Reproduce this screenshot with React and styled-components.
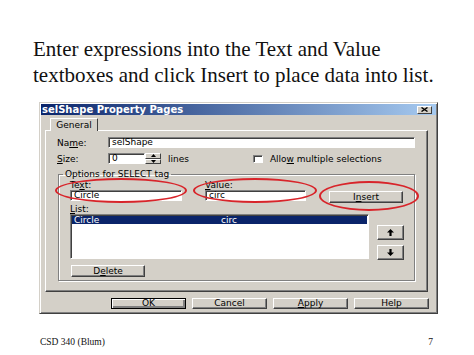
import React from 'react';
import styled, { createGlobalStyle } from 'styled-components';

const GlobalStyle = createGlobalStyle`
  html, body {
    margin: 0;
    padding: 0;
    background: #fff;
  }
`;

const Slide = styled.div`
  width: 474px;
  height: 355px;
  box-sizing: border-box;
  padding-top: 36px;
  overflow: hidden;
  background: #fff;
  font-family: "Liberation Serif", "Times New Roman", serif;
  color: #111;
`;

const Heading = styled.h1`
  margin: 0 0 0 33px;
  font-weight: normal;
  font-size: 21px;
  line-height: 26px;
`;

const Window = styled.div`
  margin: 14px 0 0 39px;
  width: 399px;
  height: 212px;
  box-sizing: border-box;
  display: flex;
  flex-direction: column;
  padding: 1px;
  background: #d4d0c8;
  border: 1px solid;
  border-color: #d4d0c8 #404040 #404040 #d4d0c8;
  box-shadow: inset 1px 1px #fff, inset -1px -1px #808080;
  font-family: "DejaVu Sans", Tahoma, sans-serif;
  font-size: 9px;
  color: #000;
`;

const TitleBar = styled.div`
  height: 11px;
  display: flex;
  align-items: center;
  justify-content: space-between;
  padding: 0 4px 0 1px;
  background: linear-gradient(to right, #0a246a, #a6caf0);
  color: #fff;
  font-weight: bold;
  font-size: 10px;
  line-height: 11px;
  white-space: nowrap;
`;

const CloseButton = styled.div`
  width: 15px;
  height: 8px;
  box-sizing: border-box;
  display: flex;
  align-items: center;
  justify-content: center;
  background: #d4d0c8;
  border: 1px solid;
  border-color: #fff #404040 #404040 #fff;
`;

const Body = styled.div`
  display: flex;
  flex-direction: column;
  padding: 3px 8px 0 4px;
`;

const TabStrip = styled.div`
  display: flex;
  padding-left: 5px;
`;

const Tab = styled.div`
  position: relative;
  z-index: 1;
  width: 48px;
  height: 13px;
  margin-bottom: -1px;
  box-sizing: border-box;
  display: flex;
  align-items: center;
  justify-content: center;
  background: #d4d0c8;
  border: 1px solid;
  border-color: #fff #404040 transparent #fff;
  border-bottom: none;
  border-radius: 1px 1px 0 0;
`;

const TabPanel = styled.div`
  height: 162px;
  box-sizing: border-box;
  display: flex;
  flex-direction: column;
  padding: 6px 12px 0 11px;
  border: 1px solid;
  border-color: #fff #404040 #404040 #fff;
  box-shadow: inset -1px -1px #808080;
`;

const FieldRow = styled.div`
  display: flex;
  align-items: center;
  height: 11px;
  margin-top: ${p => p.$gap || 0}px;
`;

const Label = styled.span`
  width: ${p => (p.$width ? `${p.$width}px` : 'auto')};
  flex-shrink: 0;
  line-height: 10px;
  white-space: nowrap;
`;

const TextBox = styled.div`
  height: ${p => p.$height || 11}px;
  width: ${p => (p.$width ? `${p.$width}px` : 'auto')};
  flex: ${p => (p.$width ? '0 0 auto' : '1')};
  box-sizing: border-box;
  display: flex;
  align-items: center;
  padding-left: 3px;
  background: #fff;
  border: 1px solid;
  border-color: #808080 #fff #fff #808080;
  box-shadow: inset 1px 1px #404040;
  font-size: 9px;
  line-height: 9px;
  white-space: nowrap;
`;

const Spinner = styled.div`
  width: 16px;
  height: 11px;
  display: flex;
  flex-direction: column;
`;

const SpinHalf = styled.div`
  flex: 1;
  display: flex;
  align-items: center;
  justify-content: center;
  box-sizing: border-box;
  background: #d4d0c8;
  border: 1px solid;
  border-color: #fff #404040 #404040 #fff;
`;

const Suffix = styled.span`
  margin-left: 7px;
`;

const CheckGroup = styled.label`
  display: flex;
  align-items: center;
  margin-left: 64px;
`;

const CheckBox = styled.span`
  width: 10px;
  height: 8px;
  box-sizing: border-box;
  margin-right: 7px;
  background: #fff;
  border: 1px solid;
  border-color: #808080 #fff #fff #808080;
  box-shadow: inset 1px 1px #404040;
`;

const GroupBox = styled.fieldset`
  margin: 5px 0 0 1px;
  padding: 0;
  min-width: 0;
  border: 1px solid #808080;
  box-shadow: inset 1px 1px #fff, 1px 1px #fff;
`;

const Legend = styled.legend`
  margin-left: 4px;
  padding: 0 2px;
  line-height: 10px;
  font-size: 9px;
`;

const GroupInner = styled.div`
  display: flex;
  flex-direction: column;
  padding: 1px 0 3px 11px;
`;

const EntryRow = styled.div`
  display: flex;
  align-items: flex-start;
`;

const Entry = styled.div`
  position: relative;
  display: flex;
  flex-direction: column;
  width: ${p => p.$width}px;
  margin-left: ${p => p.$offset || 0}px;
`;

const Ring = styled.span`
  position: absolute;
  left: ${p => p.$l}px;
  right: ${p => p.$r}px;
  top: ${p => p.$t}px;
  bottom: ${p => p.$b}px;
  border: 2px solid #d8242a;
  border-radius: 50%;
  pointer-events: none;
`;

const ButtonSlot = styled.div`
  position: relative;
  margin: ${p => p.$top || 0}px 0 0 ${p => p.$offset || 0}px;
`;

const Button = styled.div`
  width: ${p => p.$width}px;
  height: ${p => p.$height || 12}px;
  box-sizing: border-box;
  display: flex;
  align-items: center;
  justify-content: center;
  background: #d4d0c8;
  border: 1px solid;
  border-color: ${p => (p.$default ? '#000' : '#fff #404040 #404040 #fff')};
  box-shadow: ${p =>
    p.$default
      ? 'inset 1px 1px #fff, inset -2px -2px #808080'
      : 'inset -1px -1px #808080'};
  font-size: 9px;
  line-height: 9px;
  white-space: nowrap;
`;

const ListCaption = styled.span`
  margin-top: 1px;
  line-height: 10px;
`;

const ListRow = styled.div`
  display: flex;
  align-items: flex-start;
`;

const ListBox = styled.div`
  width: 299px;
  height: 45px;
  box-sizing: border-box;
  padding: 1px 0 0 1px;
  background: #fff;
  border: 1px solid;
  border-color: #808080 #fff #fff #808080;
  box-shadow: inset 1px 1px #404040;
`;

const ListItem = styled.div`
  display: flex;
  height: 8px;
  padding-left: 2px;
  margin-right: 1px;
  background: ${p => (p.$selected ? '#0a246a' : 'transparent')};
  color: ${p => (p.$selected ? '#fff' : '#000')};
  font-size: 9px;
  line-height: 8px;
`;

const ListCell = styled.span`
  width: ${p => p.$width}px;
  flex-shrink: 0;
`;

const MoveButtons = styled.div`
  display: flex;
  flex-direction: column;
  gap: 5px;
  margin: 11px 0 0 8px;
`;

const ButtonBar = styled.div`
  display: flex;
  justify-content: flex-end;
  gap: 6px;
  margin: 6px -1px 0 0;
`;

const Footer = styled.div`
  display: flex;
  justify-content: space-between;
  margin-top: 22px;
  padding: 0 41px 0 40px;
  font-size: 9.5px;
  line-height: 12px;
  color: #111;
`;

const Arrow = ({ up }) => (
  <svg width="7" height="7" viewBox="0 0 7 7">
    <path
      d={up ? 'M3.5 0 L7 3.5 L4.6 3.5 L4.6 7 L2.4 7 L2.4 3.5 L0 3.5 Z' : 'M3.5 7 L7 3.5 L4.6 3.5 L4.6 0 L2.4 0 L2.4 3.5 L0 3.5 Z'}
      fill="#000"
    />
  </svg>
);

const Tri = ({ up }) => (
  <svg width="5" height="3" viewBox="0 0 5 3">
    <path d={up ? 'M2.5 0 L5 3 L0 3 Z' : 'M0 0 L5 0 L2.5 3 Z'} fill="#000" />
  </svg>
);

export default function App() {
  return (
    <>
      <GlobalStyle />
      <Slide>
        <Heading>
          Enter expressions into the Text and Value
          <br />
          textboxes and click Insert to place data into list.
        </Heading>

        <Window>
          <TitleBar>
            <span>selShape Property Pages</span>
            <CloseButton>
              <svg width="7" height="5" viewBox="0 0 7 5">
                <path d="M0.5 0.5 L6.5 4.5 M6.5 0.5 L0.5 4.5" stroke="#000" strokeWidth="1.4" />
              </svg>
            </CloseButton>
          </TitleBar>

          <Body>
            <TabStrip>
              <Tab>General</Tab>
            </TabStrip>
            <TabPanel>
              <FieldRow>
                <Label $width={51}>Na<u>m</u>e:</Label>
                <TextBox>selShape</TextBox>
              </FieldRow>
              <FieldRow $gap={5}>
                <Label $width={51}><u>S</u>ize:</Label>
                <TextBox $width={37}>0</TextBox>
                <Spinner>
                  <SpinHalf><Tri up /></SpinHalf>
                  <SpinHalf><Tri /></SpinHalf>
                </Spinner>
                <Suffix>lines</Suffix>
                <CheckGroup>
                  <CheckBox />
                  <span>Allo<u>w</u> multiple selections</span>
                </CheckGroup>
              </FieldRow>

              <GroupBox>
                <Legend>Options for SELECT tag</Legend>
                <GroupInner>
                  <EntryRow>
                    <Entry $width={112}>
                      <Label>Te<u>x</u>t:</Label>
                      <TextBox $height={10}>Circle</TextBox>
                      <Ring $l={-15} $r={-5} $t={-2} $b={-2} />
                    </Entry>
                    <Entry $width={101} $offset={23}>
                      <Label><u>V</u>alue:</Label>
                      <TextBox $height={10}>circ</TextBox>
                      <Ring $l={-12} $r={-11} $t={-2} $b={-2} />
                    </Entry>
                    <ButtonSlot $top={11} $offset={23}>
                      <Button $width={74}>I<u>n</u>sert</Button>
                      <Ring $l={-10} $r={-16} $t={-10} $b={-8} />
                    </ButtonSlot>
                  </EntryRow>

                  <ListCaption><u>L</u>ist:</ListCaption>
                  <ListRow>
                    <ListBox>
                      <ListItem $selected>
                        <ListCell $width={147}>Circle</ListCell>
                        <ListCell $width={60}>circ</ListCell>
                      </ListItem>
                    </ListBox>
                    <MoveButtons>
                      <Button $width={27} $height={15}><Arrow up /></Button>
                      <Button $width={27} $height={15}><Arrow /></Button>
                    </MoveButtons>
                  </ListRow>

                  <ButtonSlot $top={5} $offset={1}>
                    <Button $width={74}>D<u>e</u>lete</Button>
                  </ButtonSlot>
                </GroupInner>
              </GroupBox>
            </TabPanel>

            <ButtonBar>
              <Button $width={75} $height={11} $default>OK</Button>
              <Button $width={75} $height={11}>Cancel</Button>
              <Button $width={75} $height={11}><u>A</u>pply</Button>
              <Button $width={75} $height={11}>Help</Button>
            </ButtonBar>
          </Body>
        </Window>

        <Footer>
          <span>CSD 340 (Blum)</span>
          <span>7</span>
        </Footer>
      </Slide>
    </>
  );
}
